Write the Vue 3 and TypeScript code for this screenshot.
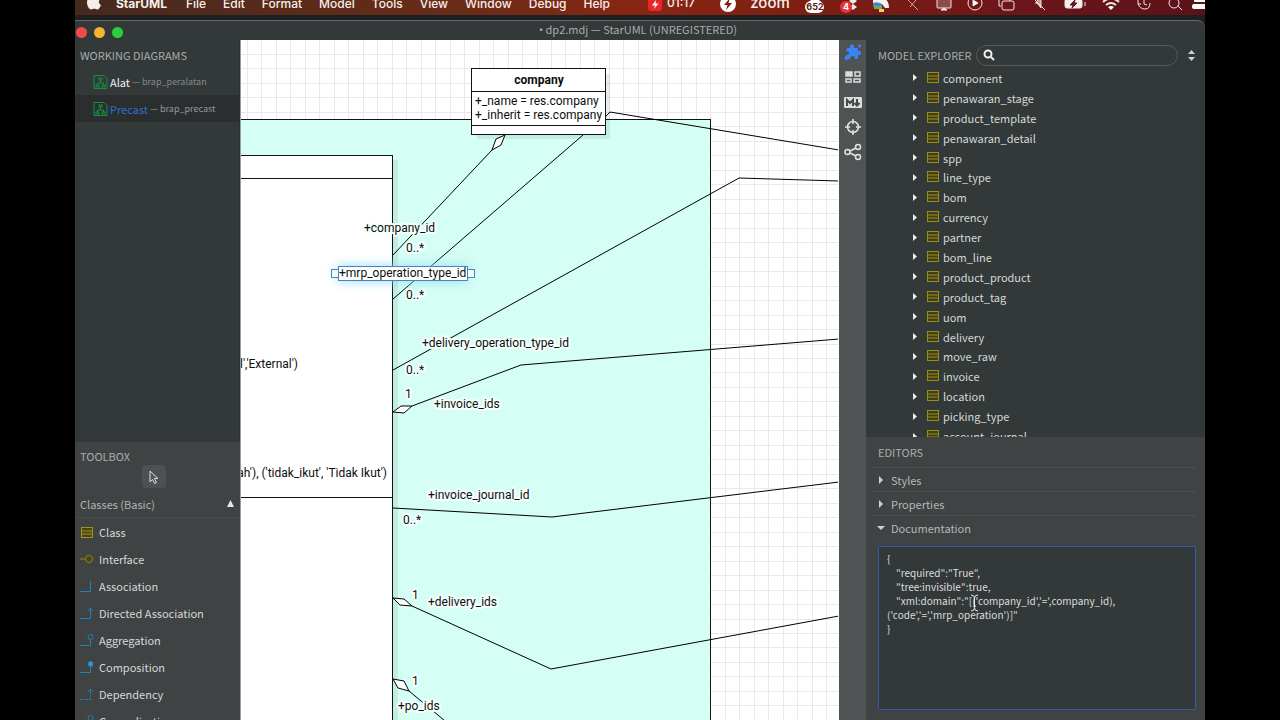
<script setup lang="ts">
import { ref } from 'vue'

const menus = ['File', 'Edit', 'Format', 'Model', 'Tools', 'View', 'Window', 'Debug', 'Help']

interface Diagram { name: string; owner: string; active: boolean }
const diagrams: Diagram[] = [
  { name: 'Alat', owner: 'brap_peralatan', active: false },
  { name: 'Precast', owner: 'brap_precast', active: true },
]

const tools = [
  { name: 'Class', icon: 'class' },
  { name: 'Interface', icon: 'interface' },
  { name: 'Association', icon: 'association' },
  { name: 'Directed Association', icon: 'directed' },
  { name: 'Aggregation', icon: 'aggregation' },
  { name: 'Composition', icon: 'composition' },
  { name: 'Dependency', icon: 'dependency' },
  { name: 'Generalization', icon: 'aggregation' },
]

const classes = [
  'component', 'penawaran_stage', 'product_template', 'penawaran_detail', 'spp', 'line_type', 'bom',
  'currency', 'partner', 'bom_line', 'product_product', 'product_tag', 'uom', 'delivery', 'move_raw',
  'invoice', 'location', 'picking_type', 'account_journal',
]

// Grid lines of the canvas, in canvas coordinates
const step = (i: number): number => Math.round((i * 579) / 40)
const gridX = Array.from({ length: 120 }, (_, i) => 7 + step(i))
const gridY = Array.from({ length: 100 }, (_, i) => 14 + step(i))

const edges = [
  'M153 215 L252 110',
  'M153 259 L343 95',
  'M153 330 L499 138 L599 141 L2000 184',
  'M366 76 L370 72 L599 110 L2000 342',
  'M172 366 L281 325 L599 299 L2000 185',
  'M153 468 L312 477 L599 442 L2000 271',
  'M172 566 L311 629 L599 576 L2000 318',
  'M169 651 L240 710',
]

const diamonds = [
  'M265 95 L256 99 L252 110 L261 105 Z',
  'M153 372 L161 366 L172 366 L164 373 Z',
  'M153 558 L160 565 L172 566 L164 559 Z',
  'M153 639 L158 648 L169 651 L164 641 Z',
]

interface Label { text: string; x: number; y: number }
const labels: Label[] = [
  { text: '+company_id', x: 124, y: 192 },
  { text: '0..*', x: 166, y: 212 },
  { text: '0..*', x: 166, y: 259 },
  { text: '+delivery_operation_type_id', x: 182, y: 307 },
  { text: '0..*', x: 166, y: 334 },
  { text: '1', x: 165, y: 358 },
  { text: '+invoice_ids', x: 194, y: 368 },
  { text: '+invoice_journal_id', x: 188, y: 459 },
  { text: '0..*', x: 163, y: 484 },
  { text: '1', x: 172, y: 559 },
  { text: '+delivery_ids', x: 188, y: 566 },
  { text: '1', x: 172, y: 645 },
  { text: '+po_ids', x: 158, y: 670 },
]

const search = ref('')
const documentation = ref(`{
    "required":"True",
    "tree:invisible":true,
    "xml:domain":"[('company_id','=',company_id),
('code','=','mrp_operation')]"
}`)
</script>

<template>
  <div class="desktop">
    <header class="menubar">
      <nav class="menus" aria-label="Application menu">
        <svg class="apple" width="14" height="16" viewBox="0 0 14 16">
          <path d="M7 4C8 4 9 3 10.500 3C12 3 13 4 13.500 5C11 6.500 11.500 10 14 11C13 13.500 11.700 15.500 10.300 15.500C9 15.500 8.500 14.800 7.200 14.800C5.900 14.800 5.300 15.500 4.200 15.500C2 15.500 0 11.500 0 8.500C0 5 2 3 4.200 3C5.500 3 6.300 4 7 4Z" fill="#f6efe9" />
        </svg>
        <button class="menu app-name" type="button">StarUML</button>
        <button v-for="m in menus" :key="m" class="menu" type="button">{{ m }}</button>
      </nav>
      <div class="status">
        <span class="recording">
          <svg width="18" height="16" viewBox="0 0 18 16"><rect x="2" y="-4" width="14" height="17" rx="3" fill="#e8252b" /><path d="M10 2L6 7.500H9L8 11L12.500 5.500H9.500Z" fill="#fff" /></svg>
          <span>01:17</span>
        </span>
        <svg width="18" height="16" viewBox="0 0 18 16"><circle cx="9" cy="4" r="8" fill="#fff" /><path d="M11 -2L5 5H8.500L7 10L13 3H9.500Z" fill="#7d1c12" /></svg>
        <span class="zoom">zoom</span>
        <svg width="24" height="16" viewBox="0 0 24 16"><path d="M6 2L10 -2H14L18 2Z" fill="#fff" /><rect x="2" y="1" width="19" height="12" rx="6" fill="#fff" /><text x="12" y="10" text-anchor="middle" class="badge dark">652</text></svg>
        <svg width="18" height="16" viewBox="0 0 18 16"><path d="M9 1L13 -2L17 1L13 4ZM9 7L13 4L17 7L13 10Z" fill="#f4e7e4" /><circle cx="6" cy="7" r="6" fill="#e8323a" /><text x="6" y="10" text-anchor="middle" class="badge">4</text></svg>
        <svg width="20" height="16" viewBox="0 0 20 16"><path d="M2 -1H14Q18 1 18 8H14L11 4H2Z" fill="#f7f1ef" /><path d="M2 3Q6 1 11 4V7H2Z" fill="#4b84c4" /><path d="M3 6H11V9H3Z" fill="#78aa55" /><path d="M8 9H13V12H8Z" fill="#e8cf63" /></svg>
        <svg class="line" width="18" height="16" viewBox="0 0 18 16"><path d="M3 -1L14 10M12 0L6 7" opacity=".7" /></svg>
        <svg class="line" width="18" height="16" viewBox="0 0 18 16"><rect x="2" y="-5" width="14" height="13" rx="1" fill="#8d4c48" /><path d="M6 10H12L9 8Z" fill="#fff" /></svg>
        <svg class="line" width="18" height="16" viewBox="0 0 18 16"><circle cx="9" cy="3" r="7" /><path d="M7 0L12 3L7 6Z" fill="#fff" /></svg>
        <svg class="line" width="18" height="16" viewBox="0 0 18 16"><path d="M4 6H2V-2H13V1" /><rect x="5" y="1" width="12" height="9" rx="2" /></svg>
        <svg class="line" width="22" height="16" viewBox="0 0 22 16"><path d="M7 3H9L13 8V-3L9 1" fill="#c89690" /><path d="M5 -2L17 10" /></svg>
        <svg class="line" width="24" height="16" viewBox="0 0 24 16"><rect x="2" y="-1" width="17" height="9" rx="2" fill="#f7eeee" /><path d="M12 0L7 5H10L9 8L14 3H11Z" fill="#651a20" stroke="#651a20" /><path d="M22 2V6" /></svg>
        <svg class="line thick" width="22" height="16" viewBox="0 0 22 16"><path d="M3 2Q11 -5 19 2M6 5Q11 1 16 5" /><path d="M8 7Q11 5 14 7L11 10Z" fill="#fff" stroke="none" /></svg>
        <svg class="line" width="18" height="16" viewBox="0 0 18 16"><path d="M3 0V4H6M3 4Q5 9 10 9Q15 9 15 3M9 0V4L12 5" /></svg>
        <svg class="line" width="18" height="16" viewBox="0 0 18 16"><circle cx="8" cy="3" r="5" /><path d="M12 6L16 10" /></svg>
        <svg class="control" width="14" height="16" viewBox="0 0 14 16"><rect x="2" y="-1" width="16" height="3" rx="1" fill="#fff" /><rect x="0" y="4" width="16" height="5" rx="2" fill="#fff" /></svg>
      </div>
    </header>

    <main class="window">
      <div class="titlebar">
        <span class="lights">
          <button type="button" class="light close" aria-label="Close"></button>
          <button type="button" class="light minimise" aria-label="Minimise"></button>
          <button type="button" class="light expand" aria-label="Expand"></button>
        </span>
        <h1><span class="dot">•</span> dp2.mdj — StarUML (UNREGISTERED)</h1>
      </div>

      <aside class="sidebar">
        <section class="working">
          <h2>WORKING DIAGRAMS</h2>
          <button v-for="d in diagrams" :key="d.name" type="button" class="diagram" :class="{ active: d.active }">
            <svg width="15" height="16" viewBox="0 0 15 16" fill="none" stroke="#14913f">
              <path d="M1 1.500H11L14 4.500V14.500H1Z" /><path d="M7.500 6V9M4.500 11V9H10.500V11" />
              <rect x="6" y="4" width="3" height="2" /><rect x="3" y="11" width="3" height="2" /><rect x="9" y="11" width="3" height="2" />
            </svg>
            <span class="name">{{ d.name }}</span><span class="owner">— {{ d.owner }}</span>
          </button>
        </section>
        <section class="toolbox">
          <h2>TOOLBOX</h2>
          <button type="button" class="pointer" aria-label="Select">
            <svg width="12" height="16" viewBox="0 0 12 16"><path d="M2 2V13L4.500 10.500L6.500 14.500L8.500 13.500L6.500 9.500H10Z" fill="#55585a" stroke="#dcdddd" /></svg>
          </button>
          <button type="button" class="group">
            <span>Classes (Basic)</span>
            <svg width="7" height="7" viewBox="0 0 7 7"><path d="M3.500 0L7 7H0Z" fill="#e6e7e7" /></svg>
          </button>
          <button v-for="t in tools" :key="t.name" type="button" class="tool">
            <svg width="14" height="14" viewBox="0 0 14 14" fill="none">
              <g v-if="t.icon === 'class'" stroke="#a2931b"><rect x="1.500" y="2.500" width="11" height="10" fill="#4a4612" /><path d="M2 6H12M2 9H12" /></g>
              <g v-else-if="t.icon === 'interface'" stroke="#8f861f"><path d="M0 7H5" /><circle cx="9" cy="7" r="3.500" fill="#4a4612" /></g>
              <g v-else stroke="#2381b4">
                <path d="M0 12.500H10.500" :stroke-dasharray="t.icon === 'dependency' ? '2 1' : undefined" />
                <path d="M10.500 2V12.500" :stroke-dasharray="t.icon === 'dependency' ? '2 1' : undefined" />
                <path v-if="t.icon === 'directed' || t.icon === 'dependency'" d="M8 5L10.500 2L13 5" />
                <circle v-if="t.icon === 'aggregation'" cx="10.500" cy="4" r="2.500" fill="#404344" />
                <circle v-if="t.icon === 'composition'" cx="10.500" cy="4" r="2.500" fill="#2f9bd2" />
              </g>
            </svg>
            <span>{{ t.name }}</span>
          </button>
        </section>
      </aside>

      <section class="canvas" aria-label="Diagram">
        <svg width="100%" height="100%">
          <g class="grid">
            <path v-for="x in gridX" :key="'x' + x" :d="`M${x} 0V2000`" />
            <path v-for="y in gridY" :key="'y' + y" :d="`M0 ${y}H2000`" />
          </g>
          <g class="shape">
            <rect class="package" x="-20" y="79" width="490" height="1000" />
            <rect class="shadow" x="-20" y="120" width="178" height="1000" />
            <rect x="-20" y="115" width="172" height="1000" />
            <path d="M0 138H152M0 457H152" />
          </g>
          <rect class="shadow" x="237" y="34" width="133" height="65" />
          <path v-for="e in edges" :key="e" class="edge" :d="e" />
          <path v-for="d in diamonds" :key="d" class="diamond" :d="d" />
          <g class="shape">
            <rect x="231" y="28" width="134" height="66" />
            <path d="M232 51H365M232 85H365" />
          </g>
          <text class="bold" x="299" y="44" text-anchor="middle">company</text>
          <text x="235" y="65">+_name = res.company</text>
          <text x="235" y="79">+_inherit = res.company</text>
          <text x="58" y="328" text-anchor="end">l','External')</text>
          <text x="147" y="437" text-anchor="end">ah'), ('tidak_ikut', 'Tidak Ikut')</text>
          <text v-for="l in labels" :key="l.text + l.y" class="label" :x="l.x" :y="l.y">{{ l.text }}</text>
          <g class="selected">
            <rect class="glow" x="97" y="226" width="131" height="15" />
            <rect x="98" y="226" width="129" height="14" />
            <rect class="handle" x="91" y="229" width="7" height="8" /><rect class="handle" x="227" y="229" width="7" height="8" />
            <text x="99" y="237">+mrp_operation_type_id</text>
          </g>
        </svg>
      </section>

      <nav class="strip" aria-label="Extensions">
        <button type="button" aria-label="Extensions">
          <svg width="18" height="18" viewBox="0 0 18 18" fill="#3b82f6"><path d="M3 5H6Q5 1.500 8 1.500Q11 1.500 10 5H14V8Q17 7 17 10Q17 13 14 12V16H11Q11 13 8.500 13Q6 13 6 16H2V12Q5 12 5 10Q5 8 2 8Z" /><circle cx="15.500" cy="3" r="1.500" /><circle cx="2.500" cy="15" r="2" /></svg>
        </button>
        <button type="button" aria-label="Layout">
          <svg width="18" height="18" viewBox="0 0 18 18" fill="none" stroke="#dcdddd" stroke-width="1.500"><rect x="2" y="4" width="6" height="4" fill="#dcdddd" /><rect x="11" y="4" width="5" height="4" /><rect x="2" y="11" width="5" height="3" /><rect x="10" y="11" width="6" height="3" /></svg>
        </button>
        <button type="button" aria-label="Markdown">
          <svg width="18" height="18" viewBox="0 0 18 18"><rect y="4" width="18" height="11" rx="1" fill="#dcdddd" /><path d="M3 13V7L6 10L9 7V13M13 6V12M10.500 10L13 12.500L15.500 10" fill="none" stroke="#47494a" stroke-width="2" /></svg>
        </button>
        <button type="button" aria-label="Locate">
          <svg width="18" height="18" viewBox="0 0 18 18" fill="none" stroke="#e2e3e3" stroke-width="1.500"><circle cx="9" cy="9" r="5.500" /><path d="M9 1V6M9 12V17M1 9H6M12 9H17" /></svg>
        </button>
        <button type="button" aria-label="Share">
          <svg width="18" height="18" viewBox="0 0 18 18" fill="none" stroke="#e2e3e3" stroke-width="1.500"><circle cx="3.500" cy="9" r="2.500" /><circle cx="14" cy="4" r="2.500" /><circle cx="14" cy="14" r="2.500" /><path d="M6 8L12 5M6 10L12 13" /></svg>
        </button>
      </nav>

      <aside class="inspector">
        <section class="explorer">
          <div class="explorer-head">
            <h2><label for="find">MODEL EXPLORER</label></h2>
            <div class="search">
              <svg width="12" height="12" viewBox="0 0 12 12" fill="none" stroke="#f0f0f0" stroke-width="2"><circle cx="5" cy="5" r="3.500" /><path d="M8 8L11 11" /></svg>
              <input id="find" v-model="search" type="text" />
            </div>
            <button type="button" class="sort" aria-label="Sort">
              <svg width="7" height="11" viewBox="0 0 7 11"><path d="M3.500 0L7 4H0ZM3.500 11L0 7H7Z" fill="#cfd1d1" /></svg>
            </button>
          </div>
          <div class="tree">
            <ul>
              <li v-for="c in classes" :key="c">
                <button type="button">
                  <svg class="arrow" width="4" height="7" viewBox="0 0 4 7"><path d="M0 0L4 3.500L0 7Z" fill="#eee" /></svg>
                  <svg width="12" height="12" viewBox="0 0 12 12" stroke="#9b8e18" fill="#403f18"><rect x=".5" y=".5" width="11" height="10" /><path d="M1 4H11M1 7H11" /></svg>
                  <span>{{ c }}</span>
                </button>
              </li>
            </ul>
          </div>
        </section>
        <section class="editors">
          <h2>EDITORS</h2>
          <button type="button" class="fold"><svg width="8" height="8" viewBox="0 0 8 8"><path d="M2 0L6 4L2 8Z" fill="#cfd1d1" /></svg>Styles</button>
          <button type="button" class="fold"><svg width="8" height="8" viewBox="0 0 8 8"><path d="M2 0L6 4L2 8Z" fill="#cfd1d1" /></svg>Properties</button>
          <button type="button" class="fold"><svg width="8" height="8" viewBox="0 0 8 8"><path d="M0 2H8L4 6Z" fill="#cfd1d1" /></svg><label for="doc">Documentation</label></button>
          <div class="doc">
            <textarea id="doc" v-model="documentation" spellcheck="false"></textarea>
            <svg class="ibeam" width="9" height="18" viewBox="0 0 9 18" fill="none" stroke="#e8e9e9"><path d="M1 1Q4.500 1 4.500 4V14Q4.500 17 1 17M8 1Q4.500 1 4.500 4M4.500 14Q4.500 17 8 17M3 12H6" /></svg>
          </div>
        </section>
      </aside>
    </main>
  </div>
</template>

<style>
html, body { margin: 0; background: #000; overflow: hidden; }
</style>

<style scoped>
* { box-sizing: border-box; }
.desktop {
  display: flex; flex-direction: column; height: 100vh; margin: 0 75px; overflow: hidden;
  background: #1d1f20; color: #c9cbcb; font: 11px/18px "Noto Sans CJK SC", "Noto Sans", sans-serif;
}
button { margin: 0; padding: 0; border: 0; background: none; color: inherit; font: inherit; text-align: left; }
h1, h2 { margin: 0; font-size: 11px; font-weight: 400; color: #a9acac; }
svg { display: block; flex: none; }

.menubar {
  display: flex; height: 15px; flex: none; overflow: hidden; color: #f8efeb;
  background: linear-gradient(90deg, #45291f 0, #6b2c17 35%, #872612 50%, #7c1d13 68%, #6a151a 85%, #5a1218 100%);
  font: 500 12px/14px Inter, sans-serif;
}
.menus { display: flex; align-items: flex-start; gap: 17px; padding-left: 12px; width: 571px; flex: none; }
.apple { margin-top: -6px; margin-right: -2px; }
.menu { height: 14px; margin-top: -3px; white-space: nowrap; }
.app-name { margin-right: 2px; font-weight: 700; }
.status { display: flex; flex: 1; gap: 13px; min-width: 0; overflow: hidden; }
.recording { display: flex; gap: 3px; margin-right: 11px; }
.recording span { margin-top: -4px; }
.recording svg { margin-top: -2px; }
.zoom { margin-top: -4px; font-size: 15px; }
.badge { font: 700 9px Inter, sans-serif; fill: #fff; }
.badge.dark { fill: #5b211b; }
.line { fill: none; stroke: #f3e4e2; }
.thick { stroke-width: 2; }
.control { margin-left: -5px; }

.window {
  display: grid; flex: 1; min-height: 0; margin-top: 5px; border-top: 1px solid #66696a;
  grid-template-columns: 165px minmax(0, 1fr) 27px 339px; grid-template-rows: 19px minmax(0, 1fr);
  border-radius: 0 8px 0 0; background: #333839; overflow: hidden;
}
.titlebar { position: relative; grid-column: 1 / -1; }
.titlebar h1 { text-align: center; padding-right: 4px; line-height: 17px; }
.dot { font-family: "Noto Sans", sans-serif; }
.lights { position: absolute; left: 1px; top: 6px; display: flex; gap: 7px; }
.light { width: 11px; height: 11px; border-radius: 50%; }
.close { background: #ee4b4f; }
.minimise { background: #f5b32e; }
.expand { background: #2bd03c; }

.sidebar { display: flex; flex-direction: column; min-height: 0; overflow: hidden; }
.working { height: 402px; flex: none; padding-top: 6px; border-right: 1px solid #2b2f30; }
.working h2 { padding-left: 5px; margin-bottom: 4px; }
.diagram { display: flex; align-items: center; width: 100%; height: 27px; padding-left: 18px; gap: 2px; white-space: nowrap; }
.diagram .name { color: #f0f1f1; }
.diagram .owner { color: #858989; font-size: 9px; }
.diagram.active { background: #2a2e2f; }
.diagram.active .name { color: #2f6fd0; }
.diagram.active .owner { color: #95999a; }

.toolbox { flex: 1; min-height: 0; background: #404344; padding-top: 6px; }
.toolbox h2 { padding-left: 5px; line-height: 17px; }
.pointer { display: grid; place-items: center; width: 24px; height: 23px; margin-left: 67px; background: #4e5152; border-radius: 4px; }
.group { display: flex; align-items: center; justify-content: space-between; width: 100%; height: 30px; padding: 2px 6px 0 5px; color: #b0b3b3; border-bottom: 1px solid #4a4d4e; }
.tool { display: flex; align-items: center; gap: 5px; width: 100%; height: 27px; padding-left: 5px; color: #d6d8d8; }

.canvas { min-width: 0; min-height: 0; background: #fff; overflow: hidden; border-left: 1px solid #9a9c9c; }
.canvas svg { margin-left: -1px; }
.canvas text { font: 12px Roboto, sans-serif; fill: #0b0f0e; }
.canvas .bold { font-weight: 700; }
.canvas .label { paint-order: stroke; stroke: #f5fffc; stroke-width: 4px; stroke-linejoin: round; }
.grid path { stroke: #e9e9e9; shape-rendering: crispEdges; }
.shape rect, .shape path { fill: #fff; stroke: #0d1513; shape-rendering: crispEdges; }
.shape .package { fill: #d5fef4; }
.shape .shadow, .shadow { fill: #2c5a4a; fill-opacity: .1; stroke: none; }
.edge { fill: none; stroke: #000; }
.diamond { fill: #fff; stroke: #000; }
.selected rect { fill: #fff; stroke: #4b84bd; shape-rendering: crispEdges; }
.selected .glow { stroke: none; fill: #8fdcf8; filter: blur(6px); shape-rendering: auto; }
.selected .handle { fill: #eafcff; }

.strip { display: flex; flex-direction: column; align-items: center; gap: 7px; padding-top: 3px; background: #505354; }
.strip button { height: 18px; }

.inspector { display: flex; flex-direction: column; min-width: 0; min-height: 0; }
.explorer { display: flex; flex-direction: column; height: 397px; flex: none; }
.explorer-head { display: flex; align-items: center; height: 28px; flex: none; padding: 2px 10px 0 12px; gap: 4px; }
.explorer-head h2 { flex: none; }
.search { display: flex; align-items: center; flex: 1; height: 21px; gap: 4px; padding: 0 8px 0 6px; border: 1px solid #57595b; border-radius: 11px; min-width: 0; }
.search input { flex: 1; min-width: 0; height: 17px; padding: 0; border: 0; outline: 0; background: none; color: #ddd; font: inherit; }
.sort { margin-left: 6px; }
.tree { flex: 1; min-height: 0; overflow: hidden; }
.tree ul { display: grid; grid-template-rows: repeat(19, 1fr); height: 378px; margin: 0; padding: 0; list-style: none; }
.tree button { display: flex; align-items: center; width: 100%; height: 100%; padding-left: 47px; color: #d6d8d8; }
.arrow { margin-right: 10px; }
.tree span { margin-left: 4px; }

.editors { display: flex; flex-direction: column; flex: 1; min-height: 0; padding: 6px 9px 10px 7px; background: #404344; }
.editors h2 { padding-left: 5px; line-height: 18px; margin-bottom: 6px; }
.fold { display: flex; align-items: center; gap: 6px; height: 24px; flex: none; padding-left: 4px; border-top: 1px solid #4b4e4f; color: #b4b7b7; }
.doc { position: relative; display: flex; flex: 1; min-height: 0; margin: 7px 0 0 5px; }
textarea {
  display: block; flex: 1; min-width: 0; resize: none; margin: 0; padding: 5px 8px; overflow: hidden;
  border: 1px solid #2f5f9e; border-radius: 2px; outline: 0; background: #333839; color: #dcdede; font: 10px/14px "Noto Sans CJK SC", "Noto Sans", sans-serif;
}
.ibeam { position: absolute; left: 92px; top: 48px; }
</style>
